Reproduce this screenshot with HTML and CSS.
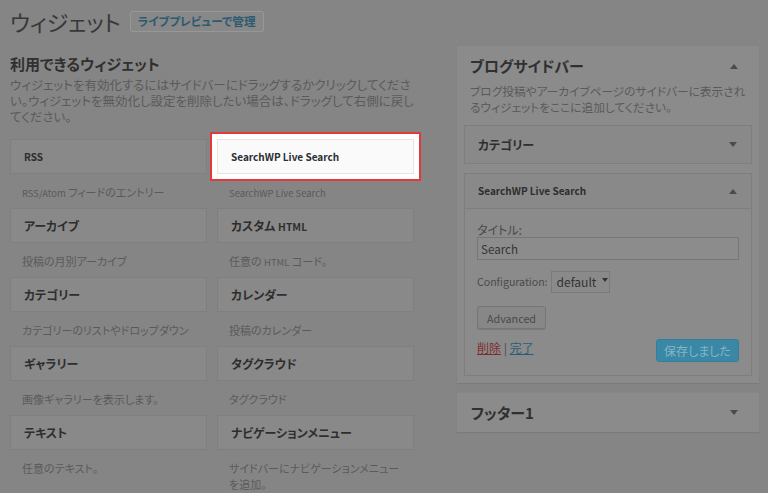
FILE: index.html
```html
<!DOCTYPE html>
<html lang="ja">
<head>
  <meta charset="UTF-8">
  <meta name="viewport" content="width=device-width, initial-scale=1.0">
  <title>ウィジェット</title>
  <link rel="stylesheet" href="styles.css">
</head>
<body>
  <div class="wrap">
    <div class="page-header">
      <h1 class="page-title">ウィジェット</h1>
      <a class="title-action">ライブプレビューで管理</a>
    </div>

    <div class="columns">
      <div class="available">
        <h2 class="section-title">利用できるウィジェット</h2>
        <p class="section-desc">ウィジェットを有効化するにはサイドバーにドラッグするかクリックしてください。ウィジェットを無効化し設定を削除したい場合は、ドラッグして右側に戻してください。</p>

        <div class="widget-grid">
          <div class="widget">
            <div class="widget-top"><span class="widget-title en">RSS</span></div>
            <div class="widget-desc"><span class="en">RSS/Atom</span> フィードのエントリー</div>
          </div>
          <div class="widget">
            <div class="widget-top highlight"><span class="widget-title en">SearchWP Live Search</span></div>
            <div class="widget-desc"><span class="en">SearchWP Live Search</span></div>
          </div>
          <div class="widget">
            <div class="widget-top"><span class="widget-title">アーカイブ</span></div>
            <div class="widget-desc">投稿の月別アーカイブ</div>
          </div>
          <div class="widget">
            <div class="widget-top"><span class="widget-title">カスタム <span class="en">HTML</span></span></div>
            <div class="widget-desc">任意の <span class="en">HTML</span> コード。</div>
          </div>
          <div class="widget">
            <div class="widget-top"><span class="widget-title">カテゴリー</span></div>
            <div class="widget-desc">カテゴリーのリストやドロップダウン</div>
          </div>
          <div class="widget">
            <div class="widget-top"><span class="widget-title">カレンダー</span></div>
            <div class="widget-desc">投稿のカレンダー</div>
          </div>
          <div class="widget">
            <div class="widget-top"><span class="widget-title">ギャラリー</span></div>
            <div class="widget-desc">画像ギャラリーを表示します。</div>
          </div>
          <div class="widget">
            <div class="widget-top"><span class="widget-title">タグクラウド</span></div>
            <div class="widget-desc">タグクラウド</div>
          </div>
          <div class="widget">
            <div class="widget-top"><span class="widget-title">テキスト</span></div>
            <div class="widget-desc">任意のテキスト。</div>
          </div>
          <div class="widget">
            <div class="widget-top"><span class="widget-title">ナビゲーションメニュー</span></div>
            <div class="widget-desc">サイドバーにナビゲーションメニュー<br>を追加。</div>
          </div>
        </div>
      </div>

      <div class="sidebars">
        <div class="sidebar">
          <div class="sidebar-head">
            <h2 class="sidebar-name">ブログサイドバー</h2>
            <span class="arrow up"></span>
          </div>
          <p class="sidebar-desc">ブログ投稿やアーカイブページのサイドバーに表示されるウィジェットをここに追加してください。</p>

          <div class="in-widget">
            <div class="in-widget-top">
              <span class="widget-title">カテゴリー</span>
              <span class="arrow down"></span>
            </div>
          </div>

          <div class="in-widget open">
            <div class="in-widget-top">
              <span class="widget-title en">SearchWP Live Search</span>
              <span class="arrow up"></span>
            </div>
            <div class="in-widget-body">
              <label class="field-label">タイトル:</label>
              <div class="text-input"><span class="en">Search</span></div>
              <div class="config-row">
                <span class="en">Configuration:</span>
                <span class="select"><span class="en">default</span> <span class="select-arrow"></span></span>
              </div>
              <div class="btn"><span class="en">Advanced</span></div>
              <div class="actions">
                <span class="links"><a class="delete">削除</a> | <a class="done">完了</a></span>
                <span class="btn-primary">保存しました</span>
              </div>
            </div>
          </div>
        </div>

        <div class="sidebar closed">
          <div class="sidebar-head">
            <h2 class="sidebar-name">フッター1</h2>
            <span class="arrow down"></span>
          </div>
        </div>
      </div>
    </div>
  </div>
</body>
</html>
```

FILE: styles.css
```css
body {
  margin: 0;
  background-color: #858585;
  font-family: "Noto Sans CJK JP", "Noto Sans", sans-serif;
  font-size: 12px;
  color: #3a3a3a;
  font-feature-settings: "palt";
  overflow: hidden;
}
.en {
  font-size: 0.86em;
  line-height: 1;
}
.wrap {
  padding: 6px 9px 0 10px;
}
.page-header {
  display: flex;
  align-items: center;
  gap: 9px;
  height: 30px;
}
.page-title {
  margin: 0;
  font-size: 22px;
  font-weight: 400;
  line-height: 30px;
  color: #383838;
}
.title-action {
  border: 1px solid #979797;
  background-color: #888;
  color: #2d5a70;
  font-weight: 700;
  font-size: 11.6px;
  line-height: 19px;
  padding: 0 7px;
  border-radius: 2px;
}
.columns {
  display: flex;
  gap: 43px;
  margin-top: 10px;
}

/* available widgets */
.available {
  width: 404px;
  flex-shrink: 0;
}
.section-title {
  margin: 8px 0 0;
  font-size: 15px;
  line-height: 20px;
  font-weight: 700;
  color: #303030;
}
.section-desc {
  margin: 3px 0 14px;
  font-size: 12.5px;
  line-height: 16px;
  color: #5a5a5a;
}
.widget-grid {
  display: grid;
  grid-template-columns: 1fr 1fr;
  grid-auto-rows: minmax(69px, auto);
  column-gap: 10px;
}
.widget-top {
  box-sizing: border-box;
  height: 35px;
  display: flex;
  align-items: center;
  padding: 0 13px;
  background-color: #898989;
  border: 1px solid #7f7f7f;
}
.widget-title {
  font-size: 12px;
  font-weight: 700;
  color: #2e2e2e;
}
.widget-title.en {
  font-size: 10px;
}
.widget-top.highlight {
  position: relative;
  z-index: 1;
  background-color: #fafafa;
  border-color: #e5e5e5;
  box-shadow: 0 0 0 5px #fff, 0 0 0 7px #e3393b;
}
.widget-top.highlight .widget-title {
  color: #2a2f33;
}
.widget-desc {
  padding: 10px 10px 0 12px;
  font-size: 11px;
  line-height: 16px;
  color: #5a5a5a;
}

/* sidebars */
.sidebars {
  width: 302px;
  flex-shrink: 0;
}
.sidebar {
  background-color: #8b8b8b;
  box-shadow: 0 1px 1px rgba(0, 0, 0, 0.08);
  padding: 0 7px 7px;
}
.sidebar-head {
  display: flex;
  align-items: center;
  justify-content: space-between;
  padding: 10px 14px 0 6px;
}
.sidebar-name {
  margin: 0;
  font-size: 15px;
  line-height: 20px;
  font-weight: 700;
  color: #303030;
}
.sidebar-desc {
  margin: 7px 6px 10px;
  font-size: 11.7px;
  line-height: 16px;
  color: #5a5a5a;
}
.arrow {
  width: 0;
  height: 0;
  border-left: 4px solid transparent;
  border-right: 4px solid transparent;
}
.arrow.up { border-bottom: 5px solid #4a4a4a; }
.arrow.down { border-top: 5px solid #4a4a4a; }

.in-widget {
  border: 1px solid #7e7e7e;
  background-color: #898989;
  margin-bottom: 9px;
}
.in-widget:last-child {
  margin-bottom: 0;
}
.in-widget-top {
  box-sizing: border-box;
  height: 37px;
  display: flex;
  align-items: center;
  justify-content: space-between;
  padding: 0 14px 0 13px;
}
.in-widget.open .in-widget-top {
  height: 35px;
  border-bottom: 1px solid #7e7e7e;
}
.in-widget-body {
  padding: 13px 12px 13px;
  background-color: #8b8b8b;
  color: #4a4a4a;
  font-size: 12px;
}
.field-label {
  display: block;
  line-height: 15px;
}
.text-input {
  box-sizing: border-box;
  height: 23px;
  line-height: 21px;
  padding: 0 3px;
  border: 1px solid #777;
  background-color: #8c8c8c;
  color: #353535;
  font-size: 13.5px;
}
.config-row {
  display: flex;
  align-items: center;
  gap: 3px;
  margin-top: 11px;
  font-size: 12.3px;
}
.select {
  box-sizing: border-box;
  display: inline-flex;
  align-items: center;
  gap: 6px;
  height: 22px;
  width: 59px;
  padding: 0 5px;
  border: 1px solid #7a7a7a;
  background-color: #8a8a8a;
  color: #333;
  font-size: 14px;
}
.select-arrow {
  width: 0;
  height: 0;
  border-left: 3px solid transparent;
  border-right: 3px solid transparent;
  border-top: 4px solid #333;
  margin-top: -4px;
}
.btn {
  box-sizing: border-box;
  display: inline-block;
  height: 23px;
  line-height: 21px;
  margin-top: 13px;
  padding: 0 9px;
  border: 1px solid #767676;
  border-radius: 3px;
  background-color: #878787;
  box-shadow: 0 1px 0 #7a7a7a;
  color: #4a4a4a;
  font-size: 12.5px;
}
.actions {
  display: flex;
  justify-content: space-between;
  align-items: flex-start;
  margin-top: 10px;
}
.links {
  margin-top: 1px;
  line-height: 16px;
}
.links a {
  text-decoration: underline;
}
.delete { color: #7e2d2d; }
.done { color: #2b5b79; }
.btn-primary {
  box-sizing: border-box;
  width: 83px;
  height: 23px;
  line-height: 21px;
  text-align: center;
  border: 1px solid #337f9b;
  border-radius: 3px;
  background-color: #3a88a5;
  color: #85b5c7;
}
.sidebar.closed {
  margin-top: 10px;
  height: 39px;
  box-sizing: border-box;
  padding: 0;
}
.sidebar.closed .sidebar-head {
  height: 39px;
  padding: 0 21px 0 14px;
}
```
